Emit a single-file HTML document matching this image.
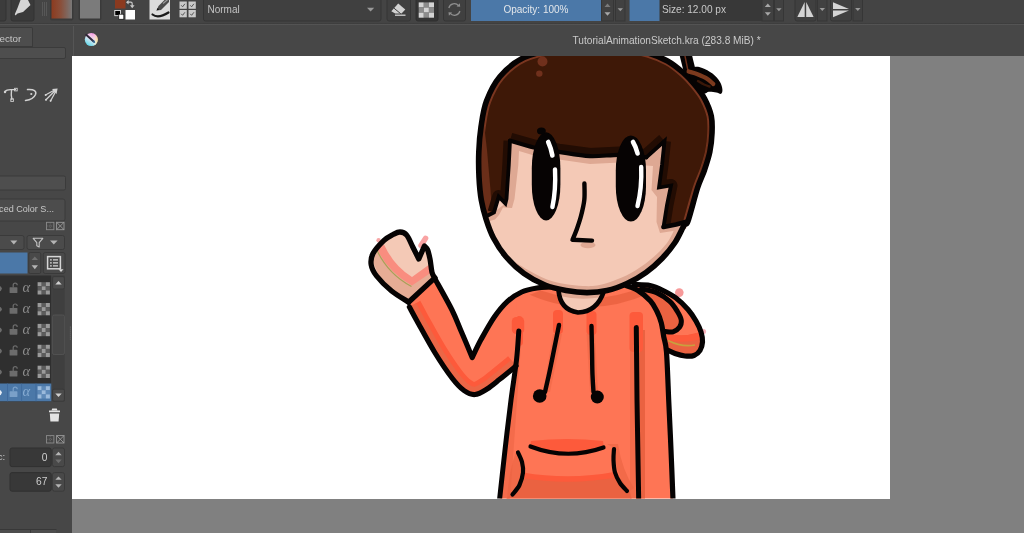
<!DOCTYPE html>
<html><head><meta charset="utf-8">
<style>
*{margin:0;padding:0;box-sizing:border-box}
html,body{width:1024px;height:533px;overflow:hidden;background:#808080;font-family:"Liberation Sans",sans-serif;}
#bw{position:absolute;left:-12px;top:-12px;width:1048px;height:557px;background:#808080;filter:blur(0.45px)}
#root{position:absolute;left:12px;top:12px;width:1024px;height:533px;overflow:visible}
svg{overflow:visible}
.abs{position:absolute}
#topbar{left:-12px;top:-12px;width:1048px;height:36px;background:#444444}
#sep{left:-12px;top:22.5px;width:1048px;height:3px;background:linear-gradient(#3d3d3d 0,#3f3f3f 38%,#5c5c5c 55%,#585858 80%,#4a4a4a 100%)}
#tabbar{left:-12px;top:25px;width:1048px;height:31px;background:#474747}
#left{left:-12px;top:25px;width:84px;height:520px;background:#474747}
#canvas{left:72px;top:56px;width:817.5px;height:442.5px;background:#fff}
.t{color:#cfcfcf;font-size:10px;white-space:nowrap}
</style></head><body>
<div id="bw"><div id="root">
<div id="canvas" class="abs"></div>
<div id="topbar" class="abs"></div>
<div id="sep" class="abs"></div>
<div id="tabbar" class="abs"></div>
<div id="left" class="abs"></div>
<!--ART--><svg class="abs" style="left:0;top:0" width="1024" height="533" viewBox="0 0 1024 533"><defs><clipPath id="cv"><rect x="72" y="56" width="817.5" height="442.5"/></clipPath></defs><g clip-path="url(#cv)">
<circle cx="679.3" cy="292.6" r="4.3" fill="#f79a9a"/>
<circle cx="703.5" cy="331.5" r="2.6" fill="#f9b4bc"/>
<path d="M425.6,238.3 L421,245.5" stroke="#f9a3a3" stroke-width="5.4" stroke-linecap="round"/>
<circle cx="378.6" cy="240.2" r="2.2" fill="#f7a6a6"/>
<path d="M634.0,284.5 C636.7,284.7 645.2,284.5 650.0,285.5 C654.8,286.5 658.7,288.4 663.0,290.5 C667.3,292.6 671.8,294.8 676.0,298.0 C680.2,301.2 684.7,305.7 688.0,309.5 C691.3,313.3 693.8,317.2 696.0,321.0 C698.2,324.8 699.9,328.5 701.0,332.0 C702.1,335.5 702.7,338.9 702.5,342.0 C702.3,345.1 701.4,348.2 700.0,350.5 C698.6,352.8 696.5,354.6 694.0,355.5 C691.5,356.4 688.2,356.3 685.0,356.0 C681.8,355.7 677.9,354.5 675.0,353.5 C672.1,352.5 668.8,350.6 667.5,350.0 L664,331 L650,301 Z" fill="#fe7555"/>
<path d="M641.5,288.9 C644.0,289.5 651.9,290.5 656.6,292.6 C661.3,294.7 666.3,298.2 669.8,301.4 C673.3,304.5 675.5,308.4 677.4,311.5 C679.3,314.6 680.9,317.7 681.3,320.3 C681.6,322.9 680.9,325.3 679.5,327.2 C678.1,329.1 675.4,331.1 673.0,331.8 C670.6,332.5 666.7,331.6 665.4,331.6 L661.3,322.8 L657,311.5 L650.5,301 L638,290.5 Z" fill="#ea6241"/>
<path d="M666,334 Q680,338 698,333 L701.5,340 Q700,352 690,355 L668,349 Z" fill="#ea6241"/>
<path d="M667,333.5 Q682,337.5 698.5,332.5 L699.5,339.5 Q684,343.5 667,340 Z" fill="#fd5a3b"/>
<path d="M668,340.5 Q682,347.5 695,345" stroke="#c9a03e" stroke-width="1.6" fill="none"/>
<path d="M634.0,284.5 C636.7,284.7 645.2,284.5 650.0,285.5 C654.8,286.5 658.7,288.4 663.0,290.5 C667.3,292.6 671.8,294.8 676.0,298.0 C680.2,301.2 684.7,305.7 688.0,309.5 C691.3,313.3 693.8,317.2 696.0,321.0 C698.2,324.8 699.9,328.5 701.0,332.0 C702.1,335.5 702.7,338.9 702.5,342.0 C702.3,345.1 701.4,348.2 700.0,350.5 C698.6,352.8 696.5,354.6 694.0,355.5 C691.5,356.4 688.2,356.3 685.0,356.0 C681.8,355.7 677.9,354.5 675.0,353.5 C672.1,352.5 668.8,350.6 667.5,350.0" fill="none" stroke="#060303" stroke-width="5.2" stroke-linecap="round"/>
<path d="M641.5,288.9 C644.0,289.5 651.9,290.5 656.6,292.6 C661.3,294.7 666.3,298.2 669.8,301.4 C673.3,304.5 675.5,308.4 677.4,311.5 C679.3,314.6 680.9,317.7 681.3,320.3 C681.6,322.9 680.9,325.3 679.5,327.2 C678.1,329.1 675.4,331.1 673.0,331.8 C670.6,332.5 666.7,331.6 665.4,331.6" fill="none" stroke="#060303" stroke-width="5" stroke-linecap="round"/>
<path d="M409.4,307.0 C410.7,309.3 412.8,313.5 417.0,321.0 C421.2,328.5 428.7,342.5 434.5,352.0 C440.3,361.5 447.1,371.6 452.0,378.0 C456.9,384.4 460.2,387.8 464.0,390.5 C467.8,393.2 471.2,394.8 475.0,394.5 C478.8,394.2 482.8,391.6 487.0,389.0 C491.2,386.4 495.2,382.8 500.0,379.0 C504.8,375.2 513.3,368.2 516.0,366.0 L518,330 L550,287 L550.0,287.0 L537.0,288.0 L521.7,292.0 L507.5,301.3 L494.3,317.0 L481.0,339.6 L472.2,357.5 L472.2,357.5 L461.5,332.0 L452.0,310.0 L434.8,278.5 L408.5,302.3 Z" fill="#fe7555"/>
<clipPath id="ac"><path d="M409.4,307.0 C410.7,309.3 412.8,313.5 417.0,321.0 C421.2,328.5 428.7,342.5 434.5,352.0 C440.3,361.5 447.1,371.6 452.0,378.0 C456.9,384.4 460.2,387.8 464.0,390.5 C467.8,393.2 471.2,394.8 475.0,394.5 C478.8,394.2 482.8,391.6 487.0,389.0 C491.2,386.4 495.2,382.8 500.0,379.0 C504.8,375.2 513.3,368.2 516.0,366.0 L518,330 L550,287 L550.0,287.0 L537.0,288.0 L521.7,292.0 L507.5,301.3 L494.3,317.0 L481.0,339.6 L472.2,357.5 L472.2,357.5 L461.5,332.0 L452.0,310.0 L434.8,278.5 L408.5,302.3 Z"/></clipPath>
<g clip-path="url(#ac)">
<path d="M409.4,307.0 C410.7,309.3 412.8,313.5 417.0,321.0 C421.2,328.5 428.7,342.5 434.5,352.0 C440.3,361.5 447.1,371.6 452.0,378.0 C456.9,384.4 460.2,387.8 464.0,390.5 C467.8,393.2 471.2,394.8 475.0,394.5 C478.8,394.2 482.8,391.6 487.0,389.0 C491.2,386.4 495.2,382.8 500.0,379.0 C504.8,375.2 513.3,368.2 516.0,366.0" fill="none" stroke="#fd5a3b" stroke-width="25"/>
<path d="M409.4,307.0 C410.7,309.3 412.8,313.5 417.0,321.0 C421.2,328.5 428.7,342.5 434.5,352.0 C440.3,361.5 447.1,371.6 452.0,378.0 C456.9,384.4 460.2,387.8 464.0,390.5 C467.8,393.2 471.2,394.8 475.0,394.5 C478.8,394.2 482.8,391.6 487.0,389.0 C491.2,386.4 495.2,382.8 500.0,379.0 C504.8,375.2 513.3,368.2 516.0,366.0" fill="none" stroke="#ec6646" stroke-width="15.5"/>
</g>
<path d="M550,287 L516,300 L518.8,331.0 L516.5,360.0 L511.0,400.0 L505.0,450.0 L499.5,500.0 L673.0,500.0 L671.0,450.0 L668.7,400.0 L666.5,352.0 L663.8,337.0 L661.3,322.8 L657.0,311.5 L650.5,301.0 L638.0,290.5 L626.0,285.5 Z" fill="#fe7555"/>
<clipPath id="tc"><path d="M550,287 L516,300 L518.8,331.0 L516.5,360.0 L511.0,400.0 L505.0,450.0 L499.5,500.0 L673.0,500.0 L671.0,450.0 L668.7,400.0 L666.5,352.0 L663.8,337.0 L661.3,322.8 L657.0,311.5 L650.5,301.0 L638.0,290.5 L626.0,285.5 Z"/></clipPath>
<g clip-path="url(#tc)">
<path d="M528,285 Q585,312 648,285 L650,293 Q585,322 524,292 Z" fill="#ea6241" opacity="0.85"/>
<rect x="636" y="330" width="9" height="170" fill="#ea6241"/>
<rect x="629.5" y="312" width="13.5" height="40" rx="4" fill="#fd5a3b"/>
<rect x="630" y="340" width="6" height="160" fill="#ea6241" opacity="0.55"/>
<rect x="512" y="316" width="11" height="30" rx="4" fill="#fd5a3b"/>
<path d="M512,345 L521,345 L510,500 L501,500 Z" fill="#ea6241" opacity="0.5"/>
<rect x="553" y="310" width="10" height="24" rx="4" fill="#fd5a3b"/>
<rect x="586.5" y="311" width="10" height="24" rx="4" fill="#fd5a3b"/>
<path d="M553,334 L562,334 L550,392 L543,392 Z" fill="#ea6241" opacity="0.45"/>
<path d="M586.5,334 L595,334 L598,392 L590,392 Z" fill="#ea6241" opacity="0.45"/>
<path d="M531,441 Q567,437 603,441 L604,448 Q567,458 530,447 Z" fill="#fd5a3b"/>
<path d="M523,474 Q570,482 617,473 L630,492 L632,500 L505,500 L515,490 Z" fill="#ea6241"/>
<path d="M523,472.5 Q570,480.5 617,471.5 L619,477 Q570,486 522,478 Z" fill="#fd5a3b"/>
<path d="M516,452 Q509,470 507,500 L516,494 Q524,470 518,452 Z" fill="#ea6241" opacity="0.6"/>
<path d="M607,444 L618,444 Q622,470 634,488 L628,492 Q614,470 614,448 Z" fill="#ea6241" opacity="0.6"/>
</g>
<rect x="511.8" y="317" width="12.4" height="17" rx="4.5" fill="#fd5a3b"/>
<path d="M558.5,288 Q560,310 578,312.5 Q597,312 604,289 Z" fill="#f4c9b6"/>
<path d="M558.5,288 L604,289 L602.5,297 Q580,301 560,296 Z" fill="#dea893"/>
<path d="M558.5,290 Q560,310 578,312.5 Q597,312 604,291" fill="none" stroke="#060303" stroke-width="4.6" stroke-linecap="round"/>
<path d="M518.8,331.0 C518.4,335.8 517.8,348.5 516.5,360.0 C515.2,371.5 512.9,385.0 511.0,400.0 C509.1,415.0 506.9,433.3 505.0,450.0 C503.1,466.7 500.4,491.7 499.5,500.0" fill="none" stroke="#060303" stroke-width="5" stroke-linecap="round"/>
<path d="M626.0,285.5 C628.0,286.3 633.9,287.9 638.0,290.5 C642.1,293.1 647.3,297.5 650.5,301.0 C653.7,304.5 655.2,307.9 657.0,311.5 C658.8,315.1 660.2,318.6 661.3,322.8 C662.4,327.1 662.9,332.1 663.8,337.0 C664.7,341.9 665.7,341.5 666.5,352.0 C667.3,362.5 668.0,383.7 668.7,400.0 C669.5,416.3 670.3,433.3 671.0,450.0 C671.7,466.7 672.7,491.7 673.0,500.0" fill="none" stroke="#060303" stroke-width="5.2" stroke-linecap="round"/>
<path d="M636.3,327.5 L637,400 L638.7,500" fill="none" stroke="#060303" stroke-width="5" stroke-linecap="round"/>
<path d="M559.0,325.0 C558.3,328.3 556.6,337.2 555.0,345.0 C553.4,352.8 551.2,364.2 549.5,372.0 C547.8,379.8 545.8,388.7 545.0,392.0" fill="none" stroke="#060303" stroke-width="4.4" stroke-linecap="round"/>
<circle cx="539.7" cy="396" r="6.8" fill="#060303"/>
<path d="M591.5,326.0 C591.6,330.0 591.8,341.8 592.0,350.0 C592.2,358.2 592.2,368.0 592.5,375.0 C592.8,382.0 593.3,389.2 593.5,392.0" fill="none" stroke="#060303" stroke-width="4.4" stroke-linecap="round"/>
<circle cx="597.3" cy="397" r="6.5" fill="#060303"/>
<path d="M530.5,446.5 Q567,460.5 603.5,447.5" fill="none" stroke="#060303" stroke-width="4.2" stroke-linecap="round"/>
<path d="M518.0,452.5 C518.7,454.1 521.2,458.7 522.0,462.0 C522.8,465.3 523.4,468.7 523.0,472.5 C522.6,476.3 521.2,481.3 519.5,485.0 C517.8,488.7 513.7,492.9 512.5,494.5" fill="none" stroke="#060303" stroke-width="4.2" stroke-linecap="round"/>
<path d="M614.0,449.0 C613.9,450.8 613.3,456.1 613.5,460.0 C613.7,463.9 613.9,468.7 615.0,472.5 C616.1,476.3 618.0,479.9 620.0,483.0 C622.0,486.1 625.8,489.7 627.0,491.0" fill="none" stroke="#060303" stroke-width="4.2" stroke-linecap="round"/>
<path d="M409.4,307.0 C410.7,309.3 412.8,313.5 417.0,321.0 C421.2,328.5 428.7,342.5 434.5,352.0 C440.3,361.5 447.1,371.6 452.0,378.0 C456.9,384.4 460.2,387.8 464.0,390.5 C467.8,393.2 471.2,394.8 475.0,394.5 C478.8,394.2 482.8,391.6 487.0,389.0 C491.2,386.4 495.2,382.8 500.0,379.0 C504.8,375.2 513.3,368.2 516.0,366.0" fill="none" stroke="#060303" stroke-width="5.2" stroke-linecap="round" stroke-linejoin="round"/>
<path d="M434.8,278.5 C437.7,283.8 447.6,301.1 452.0,310.0 C456.4,318.9 458.1,324.1 461.5,332.0 C464.9,339.9 470.4,353.2 472.2,357.5 L472.2,357.5 C473.7,354.5 477.3,346.4 481.0,339.6 C484.7,332.9 489.9,323.4 494.3,317.0 C498.7,310.6 502.9,305.5 507.5,301.3 C512.1,297.1 516.8,294.2 521.7,292.0 C526.6,289.8 532.3,288.8 537.0,288.0 C541.7,287.2 547.8,287.2 550.0,287.0" fill="none" stroke="#060303" stroke-width="5.2" stroke-linecap="round" stroke-linejoin="round"/>
<path d="M408.5,302.0 C405.7,300.2 396.9,295.3 391.6,291.0 C386.3,286.7 380.0,280.4 376.6,276.0 C373.2,271.6 371.8,268.6 371.2,264.8 C370.6,261.1 370.9,257.6 373.0,253.5 C375.1,249.4 380.7,243.6 384.0,240.4 C387.3,237.2 390.3,235.9 393.0,234.5 C395.7,233.1 397.7,231.9 400.0,232.0 C402.3,232.1 404.6,232.7 406.6,235.0 C408.7,237.3 411.4,244.2 412.3,246.0 L418.8,259 L424.4,246 L424.4,246.0 C424.9,246.6 426.6,247.3 427.5,249.5 C428.4,251.7 429.2,255.2 430.0,259.0 C430.8,262.8 431.2,269.2 432.0,272.3 C432.8,275.4 434.3,277.0 434.8,277.9 Z" fill="#f4c9b6"/>
<clipPath id="hdc"><path d="M408.5,302.0 C405.7,300.2 396.9,295.3 391.6,291.0 C386.3,286.7 380.0,280.4 376.6,276.0 C373.2,271.6 371.8,268.6 371.2,264.8 C370.6,261.1 370.9,257.6 373.0,253.5 C375.1,249.4 380.7,243.6 384.0,240.4 C387.3,237.2 390.3,235.9 393.0,234.5 C395.7,233.1 397.7,231.9 400.0,232.0 C402.3,232.1 404.6,232.7 406.6,235.0 C408.7,237.3 411.4,244.2 412.3,246.0 L418.8,259 L424.4,246 L424.4,246.0 C424.9,246.6 426.6,247.3 427.5,249.5 C428.4,251.7 429.2,255.2 430.0,259.0 C430.8,262.8 431.2,269.2 432.0,272.3 C432.8,275.4 434.3,277.0 434.8,277.9 Z"/></clipPath>
<g clip-path="url(#hdc)">
<path d="M368,250 L380,244 Q392,272 412,283 L432,268 L436,282 L408,304 L385,290 Z" fill="#e6ac95"/>
<path d="M377,249 L384,244.5 Q394,266 412,277 L430,264 L432,272 L412,285.5 Q388,272 377,249 Z" fill="#f98d7f"/>
<path d="M376.8,250 Q388,274 411.5,286.5" stroke="#a9a057" stroke-width="1.2" fill="none"/>
</g>
<path d="M408.5,302.0 C405.7,300.2 396.9,295.3 391.6,291.0 C386.3,286.7 380.0,280.4 376.6,276.0 C373.2,271.6 371.8,268.6 371.2,264.8 C370.6,261.1 370.9,257.6 373.0,253.5 C375.1,249.4 380.7,243.6 384.0,240.4 C387.3,237.2 390.3,235.9 393.0,234.5 C395.7,233.1 397.7,231.9 400.0,232.0 C402.3,232.1 404.6,232.7 406.6,235.0 C408.7,237.3 411.4,244.2 412.3,246.0 L418.8,259 L424.4,246 L424.4,246.0 C424.9,246.6 426.6,247.3 427.5,249.5 C428.4,251.7 429.2,255.2 430.0,259.0 C430.8,262.8 431.2,269.2 432.0,272.3 C432.8,275.4 434.3,277.0 434.8,277.9" fill="none" stroke="#060303" stroke-width="5.3" stroke-linejoin="round" stroke-linecap="round"/>
<path d="M408.5,302.3 L434.8,277.9" stroke="#060303" stroke-width="5.3" stroke-linecap="round"/>
<path d="M595.0,47.0 C583.8,47.1 569.8,47.2 558.0,49.0 C546.2,50.8 533.7,52.9 524.0,57.5 C514.3,62.1 506.2,69.2 500.0,76.5 C493.8,83.8 489.7,92.6 486.5,101.0 C483.3,109.4 482.3,118.5 481.0,127.0 C479.7,135.5 479.1,143.7 478.8,152.0 C478.5,160.3 478.6,169.0 479.0,177.0 C479.4,185.0 480.1,193.0 481.3,200.0 C482.5,207.0 484.0,212.5 486.0,218.8 C488.0,225.1 490.2,231.7 493.5,238.0 C496.8,244.3 500.7,250.6 505.8,256.5 C510.9,262.4 517.5,268.8 524.0,273.5 C530.5,278.2 538.0,282.2 545.0,285.0 C552.0,287.8 559.0,289.2 566.0,290.5 C573.0,291.8 580.2,292.6 587.0,292.6 C593.8,292.6 600.3,292.1 607.0,290.6 C613.7,289.1 620.5,286.5 627.0,283.5 C633.5,280.5 640.2,276.7 646.0,272.5 C651.8,268.3 657.2,263.5 662.0,258.5 C666.8,253.5 671.2,248.2 675.0,242.5 C678.8,236.8 682.3,228.1 684.5,224.5 C686.7,220.9 685.8,227.1 688.0,221.0 C690.2,214.9 694.8,196.5 697.5,188.0 C700.2,179.5 702.5,176.0 704.5,170.0 C706.5,164.0 708.5,158.2 709.8,152.0 C711.0,145.8 711.8,139.0 712.0,133.0 C712.2,127.0 712.5,121.8 711.3,116.0 C710.0,110.2 707.3,103.8 704.5,98.5 C701.7,93.2 698.1,88.8 694.5,84.5 C690.9,80.2 687.5,76.4 683.0,72.5 C678.5,68.6 673.3,64.2 667.5,61.0 C661.7,57.8 655.1,55.1 648.0,53.0 C640.9,50.9 633.8,49.5 625.0,48.5 C616.2,47.5 606.2,46.9 595.0,47.0Z" fill="#f4c9b6"/>
<path d="M505.6,256.3 C508.8,259.4 518.4,270.2 525.0,275.0 C531.6,279.8 538.3,282.5 545.0,285.0 C551.7,287.5 558.3,288.8 565.0,290.0 C571.7,291.2 579.4,292.2 585.0,292.5 C590.6,292.8 593.4,292.9 598.8,292.0 C604.2,291.1 611.3,289.2 617.5,287.0 C623.7,284.8 629.8,282.6 636.0,279.0 C642.2,275.4 648.7,271.0 655.0,265.7 C661.3,260.4 669.1,253.6 673.8,247.0 C678.5,240.4 681.5,229.5 683.0,226.0 L676.0,226.0 C674.5,228.8 671.3,237.3 667.0,243.0 C662.7,248.7 656.0,255.0 650.0,260.0 C644.0,265.0 637.2,269.5 631.0,273.0 C624.8,276.5 618.7,278.9 613.0,281.0 C607.3,283.1 602.0,284.7 597.0,285.5 C592.0,286.3 588.3,286.2 583.0,286.0 C577.7,285.8 571.0,285.1 565.0,284.0 C559.0,282.9 553.2,281.8 547.0,279.5 C540.8,277.2 534.9,273.9 528.0,270.0 C521.1,266.1 509.3,258.6 505.6,256.3 Z" fill="#dea893"/>
<path d="M510,141 L534,147.5 L559,151.5 L590,156 L620,154.5 L646,157.5 L664.5,141 L672,186 L664,227 L688,221 L686,229 L660,233 L656.5,222 L657,197 L651.5,190 L653,166 L646,165.5 L620,162.5 L590,164 L559,159.5 L534,155.5 L519,151 L518.3,165 L514.5,199 L512,208 L503,207.5 L499,215 L495,219.5 L488,221.5 L482,213 L494,212 L506,203 Z" fill="#dea893"/>
<ellipse cx="588" cy="245" rx="7.5" ry="3.2" fill="#dea893"/>
<path d="M478.8,152.0 C479.2,147.8 479.7,135.5 481.0,127.0 C482.3,118.5 483.3,109.4 486.5,101.0 C489.7,92.6 493.8,83.8 500.0,76.5 C506.2,69.2 514.3,62.1 524.0,57.5 C533.7,52.9 546.2,50.8 558.0,49.0 C569.8,47.2 583.8,47.1 595.0,47.0 C606.2,46.9 616.2,47.5 625.0,48.5 C633.8,49.5 640.9,50.9 648.0,53.0 C655.1,55.1 661.7,57.8 667.5,61.0 C673.3,64.2 678.5,68.6 683.0,72.5 C687.5,76.4 690.9,80.2 694.5,84.5 C698.1,88.8 701.7,93.2 704.5,98.5 C707.3,103.8 710.0,110.2 711.3,116.0 C712.5,121.8 712.2,127.0 712.0,133.0 C711.8,139.0 711.0,145.8 709.8,152.0 C708.5,158.2 706.5,164.0 704.5,170.0 C702.5,176.0 700.2,179.5 697.5,188.0 C694.8,196.5 689.6,215.5 688.0,221.0 L663.5,227.0 L667.0,205.0 L671.0,185.5 L659.0,187.5 L662.0,165.0 L664.5,141.0 L646.3,157.3 L620.0,154.5 L590.0,156.0 L558.5,151.6 L533.8,147.5 L510.0,140.7 L508.8,165.0 L506.5,199.0 L505.4,203.4 L498.7,196.6 L496.0,205.0 L494.0,212.4 L487.4,215.8 L483.0,207.0 L479.5,185.0Z" fill="#3e1807"/>
<clipPath id="hc"><path d="M478.8,152.0 C479.2,147.8 479.7,135.5 481.0,127.0 C482.3,118.5 483.3,109.4 486.5,101.0 C489.7,92.6 493.8,83.8 500.0,76.5 C506.2,69.2 514.3,62.1 524.0,57.5 C533.7,52.9 546.2,50.8 558.0,49.0 C569.8,47.2 583.8,47.1 595.0,47.0 C606.2,46.9 616.2,47.5 625.0,48.5 C633.8,49.5 640.9,50.9 648.0,53.0 C655.1,55.1 661.7,57.8 667.5,61.0 C673.3,64.2 678.5,68.6 683.0,72.5 C687.5,76.4 690.9,80.2 694.5,84.5 C698.1,88.8 701.7,93.2 704.5,98.5 C707.3,103.8 710.0,110.2 711.3,116.0 C712.5,121.8 712.2,127.0 712.0,133.0 C711.8,139.0 711.0,145.8 709.8,152.0 C708.5,158.2 706.5,164.0 704.5,170.0 C702.5,176.0 700.2,179.5 697.5,188.0 C694.8,196.5 689.6,215.5 688.0,221.0 L663.5,227.0 L667.0,205.0 L671.0,185.5 L659.0,187.5 L662.0,165.0 L664.5,141.0 L646.3,157.3 L620.0,154.5 L590.0,156.0 L558.5,151.6 L533.8,147.5 L510.0,140.7 L508.8,165.0 L506.5,199.0 L505.4,203.4 L498.7,196.6 L496.0,205.0 L494.0,212.4 L487.4,215.8 L483.0,207.0 L479.5,185.0Z"/></clipPath>
<g clip-path="url(#hc)">
<path d="M478.8,152.0 C479.2,147.8 479.7,135.5 481.0,127.0 C482.3,118.5 483.3,109.4 486.5,101.0 C489.7,92.6 493.8,83.8 500.0,76.5 C506.2,69.2 514.3,62.1 524.0,57.5 C533.7,52.9 546.2,50.8 558.0,49.0 C569.8,47.2 583.8,47.1 595.0,47.0 C606.2,46.9 616.2,47.5 625.0,48.5 C633.8,49.5 640.9,50.9 648.0,53.0 C655.1,55.1 661.7,57.8 667.5,61.0 C673.3,64.2 678.5,68.6 683.0,72.5 C687.5,76.4 690.9,80.2 694.5,84.5 C698.1,88.8 701.7,93.2 704.5,98.5 C707.3,103.8 710.0,110.2 711.3,116.0 C712.5,121.8 712.2,127.0 712.0,133.0 C711.8,139.0 711.0,145.8 709.8,152.0 C708.5,158.2 706.5,164.0 704.5,170.0 C702.5,176.0 700.2,179.5 697.5,188.0 C694.8,196.5 689.6,215.5 688.0,221.0" fill="none" stroke="#7a3620" stroke-width="9.4"/>
<path d="M478.8,152.0 C479.2,147.8 479.7,135.5 481.0,127.0 C482.3,118.5 483.3,109.4 486.5,101.0 C489.7,92.6 493.8,83.8 500.0,76.5 C506.2,69.2 514.3,62.1 524.0,57.5 C533.7,52.9 546.2,50.8 558.0,49.0 C569.8,47.2 583.8,47.1 595.0,47.0 C606.2,46.9 616.2,47.5 625.0,48.5 C633.8,49.5 640.9,50.9 648.0,53.0 C655.1,55.1 661.7,57.8 667.5,61.0 C673.3,64.2 678.5,68.6 683.0,72.5 C687.5,76.4 690.9,80.2 694.5,84.5 C698.1,88.8 701.7,93.2 704.5,98.5 C707.3,103.8 710.0,110.2 711.3,116.0 C712.5,121.8 712.2,127.0 712.0,133.0 C711.8,139.0 711.0,145.8 709.8,152.0 C708.5,158.2 706.5,164.0 704.5,170.0 C702.5,176.0 700.2,179.5 697.5,188.0 C694.8,196.5 689.6,215.5 688.0,221.0" fill="none" stroke="#3e1807" stroke-width="12" transform="translate(0,0)" opacity="0"/>
<path d="M476,110 L482.5,112 L487,150 L490.5,190 L492,212 L484,218 L474,200 Z" fill="#6a2e19"/>
<path d="M716,120 L709.5,120 L706,150 L698,180 L687,214 L692,224 L700,200 Z" fill="#6a2e19" opacity="0.85"/>
<path d="M510.0,140.7 L533.8,147.5 L558.5,151.6 L590.0,156.0 L620.0,154.5 L646.3,157.3 L664.5,141.0" fill="none" stroke="#220c03" stroke-width="16" stroke-linejoin="round"/>
<path d="M510.0,140.7 L508.8,165.0 L506.5,199.0 L498.7,196.6 L494.0,212.4" fill="none" stroke="#220c03" stroke-width="13" stroke-linejoin="round"/>
<path d="M664.5,141.0 L662.0,165.0 L659.0,187.5 L671.0,185.5 L667.0,205.0 L663.5,227.0" fill="none" stroke="#220c03" stroke-width="13" stroke-linejoin="round"/>
</g>
<circle cx="542.5" cy="61.5" r="5" fill="#70301c"/><circle cx="539.3" cy="73.6" r="3.2" fill="#70301c"/>
<path d="M595.0,47.0 C583.8,47.1 569.8,47.2 558.0,49.0 C546.2,50.8 533.7,52.9 524.0,57.5 C514.3,62.1 506.2,69.2 500.0,76.5 C493.8,83.8 489.7,92.6 486.5,101.0 C483.3,109.4 482.3,118.5 481.0,127.0 C479.7,135.5 479.1,143.7 478.8,152.0 C478.5,160.3 478.6,169.0 479.0,177.0 C479.4,185.0 480.1,193.0 481.3,200.0 C482.5,207.0 484.0,212.5 486.0,218.8 C488.0,225.1 490.2,231.7 493.5,238.0 C496.8,244.3 500.7,250.6 505.8,256.5 C510.9,262.4 517.5,268.8 524.0,273.5 C530.5,278.2 538.0,282.2 545.0,285.0 C552.0,287.8 559.0,289.2 566.0,290.5 C573.0,291.8 580.2,292.6 587.0,292.6 C593.8,292.6 600.3,292.1 607.0,290.6 C613.7,289.1 620.5,286.5 627.0,283.5 C633.5,280.5 640.2,276.7 646.0,272.5 C651.8,268.3 657.2,263.5 662.0,258.5 C666.8,253.5 671.2,248.2 675.0,242.5 C678.8,236.8 682.3,228.1 684.5,224.5 C686.7,220.9 685.8,227.1 688.0,221.0 C690.2,214.9 694.8,196.5 697.5,188.0 C700.2,179.5 702.5,176.0 704.5,170.0 C706.5,164.0 708.5,158.2 709.8,152.0 C711.0,145.8 711.8,139.0 712.0,133.0 C712.2,127.0 712.5,121.8 711.3,116.0 C710.0,110.2 707.3,103.8 704.5,98.5 C701.7,93.2 698.1,88.8 694.5,84.5 C690.9,80.2 687.5,76.4 683.0,72.5 C678.5,68.6 673.3,64.2 667.5,61.0 C661.7,57.8 655.1,55.1 648.0,53.0 C640.9,50.9 633.8,49.5 625.0,48.5 C616.2,47.5 606.2,46.9 595.0,47.0Z" fill="none" stroke="#060303" stroke-width="5.6" stroke-linejoin="round"/>
<path d="M687.5,221.5 L676.0,224.5 L663.5,227.0" fill="none" stroke="#060303" stroke-width="4.6" stroke-linejoin="round" stroke-linecap="round"/>
<path d="M663.5,227.0 L667.0,205.0 L671.0,185.5 L659.0,187.5 L662.0,165.0 L664.5,141.0 L646.3,157.3" fill="none" stroke="#060303" stroke-width="3.8" stroke-linejoin="miter" stroke-miterlimit="6" stroke-linecap="round"/>
<path d="M646.3,157.3 C641.9,156.9 629.4,155.0 620.0,154.8 C610.6,154.6 600.2,156.7 590.0,156.2 C579.8,155.7 567.9,153.2 558.5,151.8 C549.1,150.4 541.9,149.3 533.8,147.5 C525.7,145.7 514.0,141.8 510.0,140.7" fill="none" stroke="#060303" stroke-width="4.2" stroke-linecap="round"/>
<path d="M510.0,140.7 L508.8,165.0 L506.5,199.0 L505.4,203.4 L498.7,196.6 L494.0,212.4 L487.4,215.8 L485.5,215.5" fill="none" stroke="#060303" stroke-width="3.8" stroke-linejoin="miter" stroke-miterlimit="6" stroke-linecap="round"/>
<path d="M677.8,48 L690.2,48 L695,67.5 L691,79 L684,73 Z" fill="#060303"/>
<path d="M689.0,72.0 C689.3,69.3 692.5,67.7 694.7,67.0 C696.9,66.3 699.2,66.9 702.2,68.0 C705.2,69.1 709.5,71.3 712.5,73.6 C715.5,75.9 718.4,79.3 720.0,82.0 C721.6,84.7 722.2,87.5 722.4,89.5 C722.6,91.5 722.0,93.3 721.0,93.8 C720.0,94.3 718.3,92.7 716.3,92.4 C714.3,92.1 710.7,91.6 708.8,91.8 C706.9,92.0 706.5,93.5 705.0,93.5 C703.5,93.5 701.5,93.8 699.5,92.0 C697.5,90.2 694.8,86.3 693.0,83.0 C691.2,79.7 688.7,74.7 689.0,72.0Z" fill="#060303"/>
<path d="M684.2,52 L688,70.8" stroke="#6d2f1a" stroke-width="1.5" stroke-linecap="round"/>
<path d="M688.6,71.5 C690.1,72.0 694.5,73.0 697.5,74.2 C700.5,75.4 704.3,77.0 706.9,78.6 C709.5,80.2 712.2,83.1 713.3,84.0" fill="none" stroke="#7c3a1e" stroke-width="4.2" stroke-linecap="round"/>
<path d="M698.0,81.0 C699.0,81.6 702.1,83.6 704.0,84.5 C705.9,85.4 708.6,86.2 709.5,86.5" fill="none" stroke="#3a1708" stroke-width="2.4" stroke-linecap="round"/>
<rect x="531.8" y="132.2" width="28.6" height="88.4" rx="14.3" ry="36" fill="#060303"/>
<ellipse cx="541.4" cy="131" rx="4.4" ry="3.6" fill="#060303"/>
<rect x="615.8" y="135.4" width="30.2" height="86.2" rx="15.1" ry="35" fill="#060303"/>
<path d="M548.2,142 Q551,148 552.4,155.5" stroke="#ffffff" stroke-width="4.6" stroke-linecap="round" fill="none"/>
<path d="M555,169.5 Q556,190 552.4,207" stroke="#ffffff" stroke-width="4.4" stroke-linecap="round" fill="none"/>
<path d="M633,142 Q636,147 637.6,153.5" stroke="#ffffff" stroke-width="4.6" stroke-linecap="round" fill="none"/>
<path d="M641.2,167 Q642,188 637.5,206" stroke="#ffffff" stroke-width="4.4" stroke-linecap="round" fill="none"/>
<path d="M584.4,183.5 C584.4,186.2 584.9,194.6 584.3,200.0 C583.7,205.4 582.3,211.0 581.0,216.0 C579.7,221.0 577.9,226.0 576.5,230.0 C575.1,234.0 573.2,238.2 572.5,239.8 L592,240.6" fill="none" stroke="#060303" stroke-width="4.4" stroke-linecap="round" stroke-linejoin="round"/>
</g></svg><!--/ART-->
<!--TOP--><svg class="abs" style="left:0;top:0" width="1024" height="25" viewBox="0 0 1024 25">
<rect x="-4" y="-3" width="10" height="24" rx="2" fill="#3c3c3c" stroke="#333"/>
<rect x="11" y="-3" width="23" height="24" rx="2" fill="#3a3a3a" stroke="#323232"/>
<path d="M20.5,0 L28,0 L30.5,5 L23,12 L17.5,13.5 L15.5,15.5 L14.8,14.2 L17.5,8 Z" fill="#d6d6d6"/>
<rect x="42.0" y="2.5" width="1" height="1" fill="#6a6a6a"/>
<rect x="44.0" y="2.5" width="1" height="1" fill="#6a6a6a"/>
<rect x="46.0" y="2.5" width="1" height="1" fill="#6a6a6a"/>
<rect x="42.0" y="4.5" width="1" height="1" fill="#6a6a6a"/>
<rect x="44.0" y="4.5" width="1" height="1" fill="#6a6a6a"/>
<rect x="46.0" y="4.5" width="1" height="1" fill="#6a6a6a"/>
<rect x="42.0" y="6.5" width="1" height="1" fill="#6a6a6a"/>
<rect x="44.0" y="6.5" width="1" height="1" fill="#6a6a6a"/>
<rect x="46.0" y="6.5" width="1" height="1" fill="#6a6a6a"/>
<rect x="42.0" y="8.5" width="1" height="1" fill="#6a6a6a"/>
<rect x="44.0" y="8.5" width="1" height="1" fill="#6a6a6a"/>
<rect x="46.0" y="8.5" width="1" height="1" fill="#6a6a6a"/>
<rect x="42.0" y="10.5" width="1" height="1" fill="#6a6a6a"/>
<rect x="44.0" y="10.5" width="1" height="1" fill="#6a6a6a"/>
<rect x="46.0" y="10.5" width="1" height="1" fill="#6a6a6a"/>
<rect x="42.0" y="12.5" width="1" height="1" fill="#6a6a6a"/>
<rect x="44.0" y="12.5" width="1" height="1" fill="#6a6a6a"/>
<rect x="46.0" y="12.5" width="1" height="1" fill="#6a6a6a"/>
<rect x="42.0" y="14.5" width="1" height="1" fill="#6a6a6a"/>
<rect x="44.0" y="14.5" width="1" height="1" fill="#6a6a6a"/>
<rect x="46.0" y="14.5" width="1" height="1" fill="#6a6a6a"/>
<defs><linearGradient id="gsw" x1="0" x2="1" y1="0" y2="0"><stop offset="0" stop-color="#8c3b1f"/><stop offset="0.45" stop-color="#8a4f3a"/><stop offset="1" stop-color="#787878"/></linearGradient></defs>
<rect x="50" y="-3" width="23.5" height="23.5" rx="2" fill="#3a3a3a"/>
<rect x="51.5" y="-3" width="20.5" height="21.5" fill="url(#gsw)"/>
<rect x="78.5" y="-3" width="23" height="23.5" rx="2" fill="#3a3a3a"/>
<rect x="80" y="-3" width="20" height="21.5" fill="#7b7b7b"/>
<rect x="115" y="-2" width="10.5" height="10.5" fill="#8b3a1f"/>
<rect x="125.5" y="10" width="9.5" height="9.5" fill="#ffffff"/>
<rect x="114.8" y="10.5" width="5.6" height="5.2" fill="#000" stroke="#fff" stroke-width="0.8"/>
<rect x="118.8" y="14.2" width="5" height="5" fill="#fff" stroke="#000" stroke-width="0.6"/>
<path d="M127.2,2.2 L130.8,2.2 Q132.2,2.2 132.2,3.8 L132.2,6" stroke="#c8c8c8" stroke-width="1.2" fill="none"/><path d="M129.9,5.2 L132.2,8.3 L134.6,5.2 Z M128.6,0 L126,2.2 L128.6,4.4 Z" fill="#c8c8c8"/>
<rect x="149.5" y="-3" width="20.5" height="22.5" fill="#dcdcdc"/>
<path d="M152.5,14.5 Q158,19 168.5,12.5" stroke="#1c1c1c" stroke-width="2.2" fill="none" stroke-linecap="round"/>
<path d="M156.5,10.5 L158.5,6 L165.5,-1 L169,-1 L169,2 L161,10 Z" fill="#4c4c4c"/><path d="M156.5,10.5 L157.6,8 L159.2,9.6 Z" fill="#111"/>
<path d="M163,3.5 L169.5,-2" stroke="#9a9a9a" stroke-width="1.2"/>
<rect x="179.5" y="1.5" width="7.3" height="7.3" fill="#cacaca"/>
<path d="M181.2,5.3 l1.4,1.5 l2.3,-3" stroke="#555" stroke-width="1" fill="none"/>
<rect x="188.5" y="1.5" width="7.3" height="7.3" fill="#cacaca"/>
<path d="M190.2,5.3 l1.4,1.5 l2.3,-3" stroke="#555" stroke-width="1" fill="none"/>
<rect x="179.5" y="10.0" width="7.3" height="7.3" fill="#cacaca"/>
<path d="M181.2,13.8 l1.4,1.5 l2.3,-3" stroke="#555" stroke-width="1" fill="none"/>
<rect x="188.5" y="10.0" width="7.3" height="7.3" fill="#cacaca"/>
<path d="M190.2,13.8 l1.4,1.5 l2.3,-3" stroke="#555" stroke-width="1" fill="none"/>
<rect x="203.5" y="-3" width="177.5" height="24" rx="2" fill="#404040" stroke="#353535"/>
<path d="M367,7.8 L374.2,7.8 L370.6,11.6 Z" fill="#9a9a9a"/>
<rect x="387" y="-3" width="23.5" height="24" rx="2" fill="#404040" stroke="#353535"/>
<path d="M391.3,11.2 L398.2,3.6 L405.3,9.4 L401.5,13.6 L395.2,13.6 Z" fill="#d2d2d2"/><path d="M395,15.2 L405.5,15.2" stroke="#d2d2d2" stroke-width="1.3"/><path d="M394,8.2 L400.8,13.8" stroke="#404040" stroke-width="1"/>
<rect x="416" y="-3" width="22" height="24" rx="2" fill="#353535" stroke="#2e2e2e"/>
<rect x="418.7" y="2.4" width="5.1" height="5.1" fill="#d4d4d4"/>
<rect x="423.8" y="2.4" width="5.1" height="5.1" fill="#8c8c8c"/>
<rect x="428.9" y="2.4" width="5.1" height="5.1" fill="#d4d4d4"/>
<rect x="418.7" y="7.5" width="5.1" height="5.1" fill="#8c8c8c"/>
<rect x="423.8" y="7.5" width="5.1" height="5.1" fill="#d4d4d4"/>
<rect x="428.9" y="7.5" width="5.1" height="5.1" fill="#8c8c8c"/>
<rect x="418.7" y="12.6" width="5.1" height="5.1" fill="#d4d4d4"/>
<rect x="423.8" y="12.6" width="5.1" height="5.1" fill="#8c8c8c"/>
<rect x="428.9" y="12.6" width="5.1" height="5.1" fill="#d4d4d4"/>
<rect x="443.5" y="-3" width="22" height="24" rx="2" fill="#404040" stroke="#353535"/>
<path d="M448.8,8 A5.6,5.6 0 0 1 458.6,5.8" stroke="#8e8e8e" stroke-width="1.25" fill="none"/><path d="M459.9,11 A5.6,5.6 0 0 1 450.1,13.2" stroke="#8e8e8e" stroke-width="1.25" fill="none"/><path d="M456.6,6.4 L460.2,6.8 L459.8,3.2 Z M452.1,12.6 L448.5,12.2 L448.9,15.8 Z" fill="#8e8e8e"/>
<rect x="471" y="-3" width="130" height="24" fill="#4b78a8"/>
<rect x="601.5" y="-3" width="12" height="24" fill="#414141" stroke="#363636"/>
<path d="M604.5,7 L610.5,7 L607.5,3.6 Z" fill="#7a7a7a"/><path d="M604.5,12.2 L610.5,12.2 L607.5,15.8 Z" fill="#a8a8a8"/>
<rect x="615.5" y="-3" width="9.5" height="24" fill="#414141" stroke="#363636"/>
<path d="M617.6,8.2 L623,8.2 L620.3,11.2 Z" fill="#9a9a9a"/>
<rect x="629.5" y="-3" width="132.5" height="24" fill="#383838"/>
<rect x="629.5" y="-3" width="30" height="24" fill="#4b78a8"/>
<rect x="762" y="-3" width="11.5" height="24" fill="#414141" stroke="#363636"/>
<path d="M764.8,7 L770.8,7 L767.8,3.6 Z" fill="#a8a8a8"/><path d="M764.8,12.2 L770.8,12.2 L767.8,15.8 Z" fill="#a8a8a8"/>
<rect x="774.5" y="-3" width="9" height="24" fill="#414141" stroke="#363636"/>
<path d="M776.2,8.2 L781.6,8.2 L778.9,11.2 Z" fill="#9a9a9a"/>
<rect x="795" y="-3" width="21" height="24" rx="2" fill="#404040" stroke="#353535"/>
<path d="M804.7,2 L804.7,17 L797.3,17 Z" fill="#d4d4d4"/><path d="M806.2,2 L806.2,17 L813.6,17 Z" fill="#d4d4d4"/>
<rect x="817.5" y="-3" width="9.5" height="24" fill="#414141" stroke="#363636"/><path d="M819.6,8 L825,8 L822.3,11 Z" fill="#9a9a9a"/>
<rect x="830.5" y="-3" width="21" height="24" rx="2" fill="#404040" stroke="#353535"/>
<path d="M833,2.2 L849,9 L833,9 Z" fill="#d4d4d4"/><path d="M833,10.4 L849,10.4 L833,17.2 Z" fill="#d4d4d4"/>
<rect x="853" y="-3" width="9.5" height="24" fill="#414141" stroke="#363636"/><path d="M855.1,8 L860.5,8 L857.8,11 Z" fill="#9a9a9a"/>
</svg>
<div class="abs t" style="left:207.5px;top:4.3px;font-size:10px;color:#c4c4c4">Normal</div>
<div class="abs t" id="op" style="left:471px;width:130px;text-align:center;top:4.4px;font-size:10px;color:#e2e6ea">Opacity: 100%</div>
<div class="abs t" id="sz" style="left:662px;top:4.4px;font-size:10.1px;color:#c8c8c8">Size: 12.00 px</div>
<div class="abs" style="left:0;top:27px;width:33px;height:20px;background:#4d4d4d;border:1px solid #3a3a3a;border-left:none;border-radius:0 2px 0 0"></div>
<div class="abs t" style="left:-0.5px;top:33px;font-size:9.8px;color:#c6c6c6">ector</div>
<div class="abs" style="left:72.5px;top:26px;width:1.2px;height:30px;background:#555555"></div>
<div class="abs t" id="title" style="left:572.5px;top:35.3px;font-size:10.15px;color:#cacaca">TutorialAnimationSketch.kra (<u>2</u>83.8 MiB) *</div>
<svg class="abs" style="left:83px;top:31px" width="17" height="17" viewBox="0 0 17 17"><defs><linearGradient id="kg" x1="0.2" y1="1" x2="0.8" y2="0"><stop offset="0" stop-color="#4fd6e8"/><stop offset="0.45" stop-color="#cfe6f2"/><stop offset="0.7" stop-color="#f6c6e6"/><stop offset="1" stop-color="#f77fe8"/></linearGradient><linearGradient id="kg2" x1="0" y1="0" x2="1" y2="0"><stop offset="0.6" stop-color="#fff" stop-opacity="0"/><stop offset="1" stop-color="#f7e27a" stop-opacity="0.95"/></linearGradient></defs><circle cx="8.3" cy="8.6" r="6.5" fill="url(#kg)"/><circle cx="8.3" cy="8.6" r="6.5" fill="url(#kg2)"/><path d="M3.2,3.8 L10.4,10.2" stroke="#33283a" stroke-width="2" stroke-linecap="round"/><path d="M9.4,9.2 L11.6,9.8 L12.2,12 L10,11.6 Z" fill="#2c5f8a"/></svg><!--/TOP-->
<!--LEFT--><svg class="abs" style="left:0;top:25px" width="73" height="508" viewBox="0 25 73 508">
<rect x="-2" y="47.5" width="67.5" height="11" rx="1.5" fill="#4e4e4e" stroke="#3b3b3b"/>
<rect x="-2" y="176" width="67.5" height="14" rx="1.5" fill="#4e4e4e" stroke="#3b3b3b"/>
<path d="M5,91.5 Q6.5,89.5 11,89.6 L16,89.6" stroke="#d2d2d2" stroke-width="1.4" fill="none"/><path d="M11.5,90 Q10.8,95 12,100" stroke="#d2d2d2" stroke-width="1.4" fill="none"/><rect x="14.6" y="88.3" width="2.6" height="2.6" fill="none" stroke="#d2d2d2" stroke-width="0.9"/><rect x="10.8" y="98.8" width="2.6" height="2.6" fill="none" stroke="#d2d2d2" stroke-width="0.9"/><circle cx="5" cy="92" r="1.2" fill="#d2d2d2"/>
<path d="M27.5,89.6 Q37.5,89 35.5,94.5 Q33.5,99.5 25.5,100.5" stroke="#d2d2d2" stroke-width="1.5" fill="none" stroke-linecap="round"/><circle cx="31.3" cy="94" r="1.1" fill="#d2d2d2"/>
<path d="M46,99.8 L55.5,90.2 M50.5,101 L56,91 M45.5,95 L55,89.8" stroke="#d2d2d2" stroke-width="1.3" fill="none" stroke-linecap="round"/><path d="M52,89 L57.6,88.6 L56.6,94 Z" fill="#d2d2d2"/><circle cx="46" cy="99.8" r="1" fill="#d2d2d2"/><circle cx="50.6" cy="100.8" r="1" fill="#d2d2d2"/><circle cx="45.7" cy="95" r="1" fill="#d2d2d2"/>
<rect x="-2" y="199" width="67" height="22" rx="2" fill="#4c4c4c" stroke="#3b3b3b"/>
<rect x="46.5" y="222.3" width="7.4" height="7.4" fill="none" stroke="#8a8a8a" stroke-width="0.9"/><path d="M46.5,226.0 l7.4,0 M50.2,222.3 l0,7.4" stroke="#7a7a7a" stroke-width="0.7" stroke-dasharray="1.2,1"/>
<rect x="56.6" y="222.3" width="7.4" height="7.4" fill="none" stroke="#9a9a9a" stroke-width="0.9"/><path d="M56.6,222.3 l7.4,7.4 M64,222.3 l-7.4,7.4" stroke="#9a9a9a" stroke-width="0.9"/>
<rect x="46.5" y="435.6" width="7.4" height="7.4" fill="none" stroke="#8a8a8a" stroke-width="0.9"/><path d="M46.5,439.3 l7.4,0 M50.2,435.6 l0,7.4" stroke="#7a7a7a" stroke-width="0.7" stroke-dasharray="1.2,1"/>
<rect x="56.6" y="435.6" width="7.4" height="7.4" fill="none" stroke="#9a9a9a" stroke-width="0.9"/><path d="M56.6,435.6 l7.4,7.4 M64,435.6 l-7.4,7.4" stroke="#9a9a9a" stroke-width="0.9"/>
<rect x="-2" y="235.5" width="26" height="14" rx="2" fill="#4b4b4b" stroke="#3a3a3a"/><path d="M10.3,240.6 L17.3,240.6 L13.8,244.4 Z" fill="#b4b4b4"/>
<rect x="27" y="235.5" width="37.5" height="14" rx="2" fill="#4b4b4b" stroke="#3a3a3a"/><path d="M50,240.6 L57.6,240.6 L53.8,244.4 Z" fill="#b4b4b4"/>
<path d="M33.2,238.3 L42.8,238.3 L39.2,242.6 L39.2,247 L36.8,245.8 L36.8,242.6 Z" fill="none" stroke="#c4c4c4" stroke-width="1.1" stroke-linejoin="round"/>
<rect x="-2" y="252.5" width="29.5" height="21" fill="#4b78a8"/>
<rect x="28.8" y="252.5" width="12" height="21" rx="1.5" fill="#494949" stroke="#3a3a3a"/><path d="M31.6,260 L38,260 L34.8,256.6 Z" fill="#6e6e6e"/><path d="M31.6,265.3 L38,265.3 L34.8,269.2 Z" fill="#b4b4b4"/>
<rect x="43.3" y="252.5" width="21.7" height="21" rx="2" fill="#494949" stroke="#3a3a3a"/>
<rect x="47.6" y="256.6" width="12.8" height="12.2" fill="none" stroke="#d6d6d6" stroke-width="1.5"/><path d="M50,259.8 l1.8,0 M53,259.8 l5,0 M50,262.8 l1.8,0 M53,262.8 l5,0 M50,265.8 l1.8,0 M53,265.8 l5,0" stroke="#d6d6d6" stroke-width="1.3"/><path d="M58.5,269.3 L63.5,269.3 L61,272 Z" fill="#d6d6d6"/>
<rect x="-2" y="275.5" width="53.3" height="126" fill="#2f2f2f"/>
<rect x="-2" y="383.5" width="53.3" height="17.8" fill="#4b78a8"/>
<path d="M7.5,383.5 l0,17.8 M21.6,383.5 l0,17.8 M36,383.5 l0,17.8" stroke="#3d679a" stroke-width="0.8"/>
<path d="M-1,285.4 Q1.5,286.4 2,288.4 Q1.5,290.9 -1,291.4" fill="#6c6c6c"/>
<rect x="9.6" y="287.2" width="7.8" height="5.8" rx="0.6" fill="#6c6c6c"/><path d="M13.2,287.4 l0,-2.2 a2,2 0 0 1 4,0" stroke="#6c6c6c" stroke-width="1.2" fill="none"/>
<text x="22.6" y="292.4" font-family="Liberation Serif" font-style="italic" font-size="14.5" fill="#8c8c8c">α</text>
<rect x="37.6" y="282.2" width="4.1" height="4.1" fill="#9a9a9a"/>
<rect x="41.7" y="282.2" width="4.1" height="4.1" fill="#5c5c5c"/>
<rect x="45.8" y="282.2" width="4.1" height="4.1" fill="#9a9a9a"/>
<rect x="37.6" y="286.3" width="4.1" height="4.1" fill="#5c5c5c"/>
<rect x="41.7" y="286.3" width="4.1" height="4.1" fill="#9a9a9a"/>
<rect x="45.8" y="286.3" width="4.1" height="4.1" fill="#5c5c5c"/>
<rect x="37.6" y="290.4" width="4.1" height="4.1" fill="#9a9a9a"/>
<rect x="41.7" y="290.4" width="4.1" height="4.1" fill="#5c5c5c"/>
<rect x="45.8" y="290.4" width="4.1" height="4.1" fill="#9a9a9a"/>
<path d="M-1,306.2 Q1.5,307.2 2,309.2 Q1.5,311.7 -1,312.2" fill="#6c6c6c"/>
<rect x="9.6" y="308.0" width="7.8" height="5.8" rx="0.6" fill="#6c6c6c"/><path d="M13.2,308.2 l0,-2.2 a2,2 0 0 1 4,0" stroke="#6c6c6c" stroke-width="1.2" fill="none"/>
<text x="22.6" y="313.2" font-family="Liberation Serif" font-style="italic" font-size="14.5" fill="#8c8c8c">α</text>
<rect x="37.6" y="303.0" width="4.1" height="4.1" fill="#9a9a9a"/>
<rect x="41.7" y="303.0" width="4.1" height="4.1" fill="#5c5c5c"/>
<rect x="45.8" y="303.0" width="4.1" height="4.1" fill="#9a9a9a"/>
<rect x="37.6" y="307.1" width="4.1" height="4.1" fill="#5c5c5c"/>
<rect x="41.7" y="307.1" width="4.1" height="4.1" fill="#9a9a9a"/>
<rect x="45.8" y="307.1" width="4.1" height="4.1" fill="#5c5c5c"/>
<rect x="37.6" y="311.2" width="4.1" height="4.1" fill="#9a9a9a"/>
<rect x="41.7" y="311.2" width="4.1" height="4.1" fill="#5c5c5c"/>
<rect x="45.8" y="311.2" width="4.1" height="4.1" fill="#9a9a9a"/>
<path d="M-1,327.1 Q1.5,328.1 2,330.1 Q1.5,332.6 -1,333.1" fill="#6c6c6c"/>
<rect x="9.6" y="328.9" width="7.8" height="5.8" rx="0.6" fill="#6c6c6c"/><path d="M13.2,329.1 l0,-2.2 a2,2 0 0 1 4,0" stroke="#6c6c6c" stroke-width="1.2" fill="none"/>
<text x="22.6" y="334.1" font-family="Liberation Serif" font-style="italic" font-size="14.5" fill="#8c8c8c">α</text>
<rect x="37.6" y="323.9" width="4.1" height="4.1" fill="#9a9a9a"/>
<rect x="41.7" y="323.9" width="4.1" height="4.1" fill="#5c5c5c"/>
<rect x="45.8" y="323.9" width="4.1" height="4.1" fill="#9a9a9a"/>
<rect x="37.6" y="328.0" width="4.1" height="4.1" fill="#5c5c5c"/>
<rect x="41.7" y="328.0" width="4.1" height="4.1" fill="#9a9a9a"/>
<rect x="45.8" y="328.0" width="4.1" height="4.1" fill="#5c5c5c"/>
<rect x="37.6" y="332.1" width="4.1" height="4.1" fill="#9a9a9a"/>
<rect x="41.7" y="332.1" width="4.1" height="4.1" fill="#5c5c5c"/>
<rect x="45.8" y="332.1" width="4.1" height="4.1" fill="#9a9a9a"/>
<path d="M-1,348.0 Q1.5,349.0 2,351.0 Q1.5,353.5 -1,354.0" fill="#6c6c6c"/>
<rect x="9.6" y="349.8" width="7.8" height="5.8" rx="0.6" fill="#6c6c6c"/><path d="M13.2,350.0 l0,-2.2 a2,2 0 0 1 4,0" stroke="#6c6c6c" stroke-width="1.2" fill="none"/>
<text x="22.6" y="355.0" font-family="Liberation Serif" font-style="italic" font-size="14.5" fill="#8c8c8c">α</text>
<rect x="37.6" y="344.8" width="4.1" height="4.1" fill="#9a9a9a"/>
<rect x="41.7" y="344.8" width="4.1" height="4.1" fill="#5c5c5c"/>
<rect x="45.8" y="344.8" width="4.1" height="4.1" fill="#9a9a9a"/>
<rect x="37.6" y="348.9" width="4.1" height="4.1" fill="#5c5c5c"/>
<rect x="41.7" y="348.9" width="4.1" height="4.1" fill="#9a9a9a"/>
<rect x="45.8" y="348.9" width="4.1" height="4.1" fill="#5c5c5c"/>
<rect x="37.6" y="353.0" width="4.1" height="4.1" fill="#9a9a9a"/>
<rect x="41.7" y="353.0" width="4.1" height="4.1" fill="#5c5c5c"/>
<rect x="45.8" y="353.0" width="4.1" height="4.1" fill="#9a9a9a"/>
<path d="M-1,368.9 Q1.5,369.9 2,371.9 Q1.5,374.4 -1,374.9" fill="#6c6c6c"/>
<rect x="9.6" y="370.7" width="7.8" height="5.8" rx="0.6" fill="#6c6c6c"/><path d="M13.2,370.9 l0,-2.2 a2,2 0 0 1 4,0" stroke="#6c6c6c" stroke-width="1.2" fill="none"/>
<text x="22.6" y="375.9" font-family="Liberation Serif" font-style="italic" font-size="14.5" fill="#8c8c8c">α</text>
<rect x="37.6" y="365.7" width="4.1" height="4.1" fill="#9a9a9a"/>
<rect x="41.7" y="365.7" width="4.1" height="4.1" fill="#5c5c5c"/>
<rect x="45.8" y="365.7" width="4.1" height="4.1" fill="#9a9a9a"/>
<rect x="37.6" y="369.8" width="4.1" height="4.1" fill="#5c5c5c"/>
<rect x="41.7" y="369.8" width="4.1" height="4.1" fill="#9a9a9a"/>
<rect x="45.8" y="369.8" width="4.1" height="4.1" fill="#5c5c5c"/>
<rect x="37.6" y="373.9" width="4.1" height="4.1" fill="#9a9a9a"/>
<rect x="41.7" y="373.9" width="4.1" height="4.1" fill="#5c5c5c"/>
<rect x="45.8" y="373.9" width="4.1" height="4.1" fill="#9a9a9a"/>
<path d="M-1,389.4 Q1.5,390.4 2,392.4 Q1.5,394.9 -1,395.4" fill="#e8eef6"/>
<rect x="9.6" y="391.2" width="7.8" height="5.8" rx="0.6" fill="#7aa0c8"/><path d="M13.2,391.4 l0,-2.2 a2,2 0 0 1 4,0" stroke="#7aa0c8" stroke-width="1.2" fill="none"/>
<text x="22.6" y="396.4" font-family="Liberation Serif" font-style="italic" font-size="14.5" fill="#86abd2">α</text>
<rect x="37.6" y="386.2" width="4.1" height="4.1" fill="#9bbadb"/>
<rect x="41.7" y="386.2" width="4.1" height="4.1" fill="#5f8ab8"/>
<rect x="45.8" y="386.2" width="4.1" height="4.1" fill="#9bbadb"/>
<rect x="37.6" y="390.3" width="4.1" height="4.1" fill="#5f8ab8"/>
<rect x="41.7" y="390.3" width="4.1" height="4.1" fill="#9bbadb"/>
<rect x="45.8" y="390.3" width="4.1" height="4.1" fill="#5f8ab8"/>
<rect x="37.6" y="394.4" width="4.1" height="4.1" fill="#9bbadb"/>
<rect x="41.7" y="394.4" width="4.1" height="4.1" fill="#5f8ab8"/>
<rect x="45.8" y="394.4" width="4.1" height="4.1" fill="#9bbadb"/>
<rect x="52.3" y="275.5" width="12.4" height="126" fill="#3f3f3f"/>
<rect x="52.6" y="276.6" width="11.8" height="12.4" rx="1.5" fill="#4b4b4b" stroke="#3a3a3a"/><path d="M55.3,284.4 L61.7,284.4 L58.5,280.9 Z" fill="#cfcfcf"/>
<rect x="52.6" y="315" width="11.8" height="39.5" rx="1.5" fill="#464646" stroke="#565656" stroke-width="0.8"/>
<rect x="52.6" y="389.2" width="11.8" height="12" rx="1.5" fill="#4b4b4b" stroke="#3a3a3a"/><path d="M55.3,393.4 L61.7,393.4 L58.5,397 Z" fill="#cfcfcf"/>
<rect x="69.8" y="326.6" width="1.2" height="1" fill="#6a6a6a"/>
<rect x="69.8" y="328.6" width="1.2" height="1" fill="#6a6a6a"/>
<rect x="69.8" y="330.6" width="1.2" height="1" fill="#6a6a6a"/>
<rect x="69.8" y="332.6" width="1.2" height="1" fill="#6a6a6a"/>
<rect x="69.8" y="334.6" width="1.2" height="1" fill="#6a6a6a"/>
<rect x="69.8" y="336.6" width="1.2" height="1" fill="#6a6a6a"/>
<rect x="69.8" y="338.6" width="1.2" height="1" fill="#6a6a6a"/>
<path d="M49,410.6 L60,410.6 L60,412.2 L49,412.2 Z M52.2,408.4 L56.8,408.4 L57.4,410.2 L51.6,410.2 Z" fill="#e4e4e4"/><path d="M49.8,413.4 L59.2,413.4 L58.6,421.4 L50.4,421.4 Z" fill="#e4e4e4"/>
<rect x="10" y="448.0" width="41.2" height="18.6" rx="2" fill="#383838" stroke="#303030"/>
<rect x="52.5" y="448.0" width="12" height="18.6" rx="2" fill="#494949" stroke="#3a3a3a"/>
<path d="M55.3,455.2 L61.7,455.2 L58.5,451.8 Z" fill="#b4b4b4"/><path d="M55.3,459.6 L61.7,459.6 L58.5,463.2 Z" fill="#6e6e6e"/>
<rect x="10" y="472.6" width="41.2" height="18.6" rx="2" fill="#383838" stroke="#303030"/>
<rect x="52.5" y="472.6" width="12" height="18.6" rx="2" fill="#494949" stroke="#3a3a3a"/>
<path d="M55.3,479.8 L61.7,479.8 L58.5,476.4 Z" fill="#b4b4b4"/><path d="M55.3,484.2 L61.7,484.2 L58.5,487.8 Z" fill="#b4b4b4"/>
<rect x="-2" y="530" width="58" height="6" fill="#4d4d4d"/><path d="M-2,529.5 L56.5,529.5" stroke="#383838" stroke-width="1.1"/><path d="M30.5,529.5 L30.5,534" stroke="#383838" stroke-width="0.9"/>
</svg>
<div class="abs t" style="left:-0.9px;top:204px;font-size:9.05px;color:#c8c8c8">ced Color S...</div>
<div class="abs t" style="left:-2.2px;top:451px;font-size:9.6px;color:#c8c8c8">c:</div>
<div class="abs t" style="left:10px;width:37.4px;text-align:right;top:451.6px;font-size:10.2px;color:#cfcfcf">0</div>
<div class="abs t" style="left:10px;width:37.4px;text-align:right;top:476px;font-size:10.2px;color:#cfcfcf">67</div><!--/LEFT-->
</div></div>
</body></html>
